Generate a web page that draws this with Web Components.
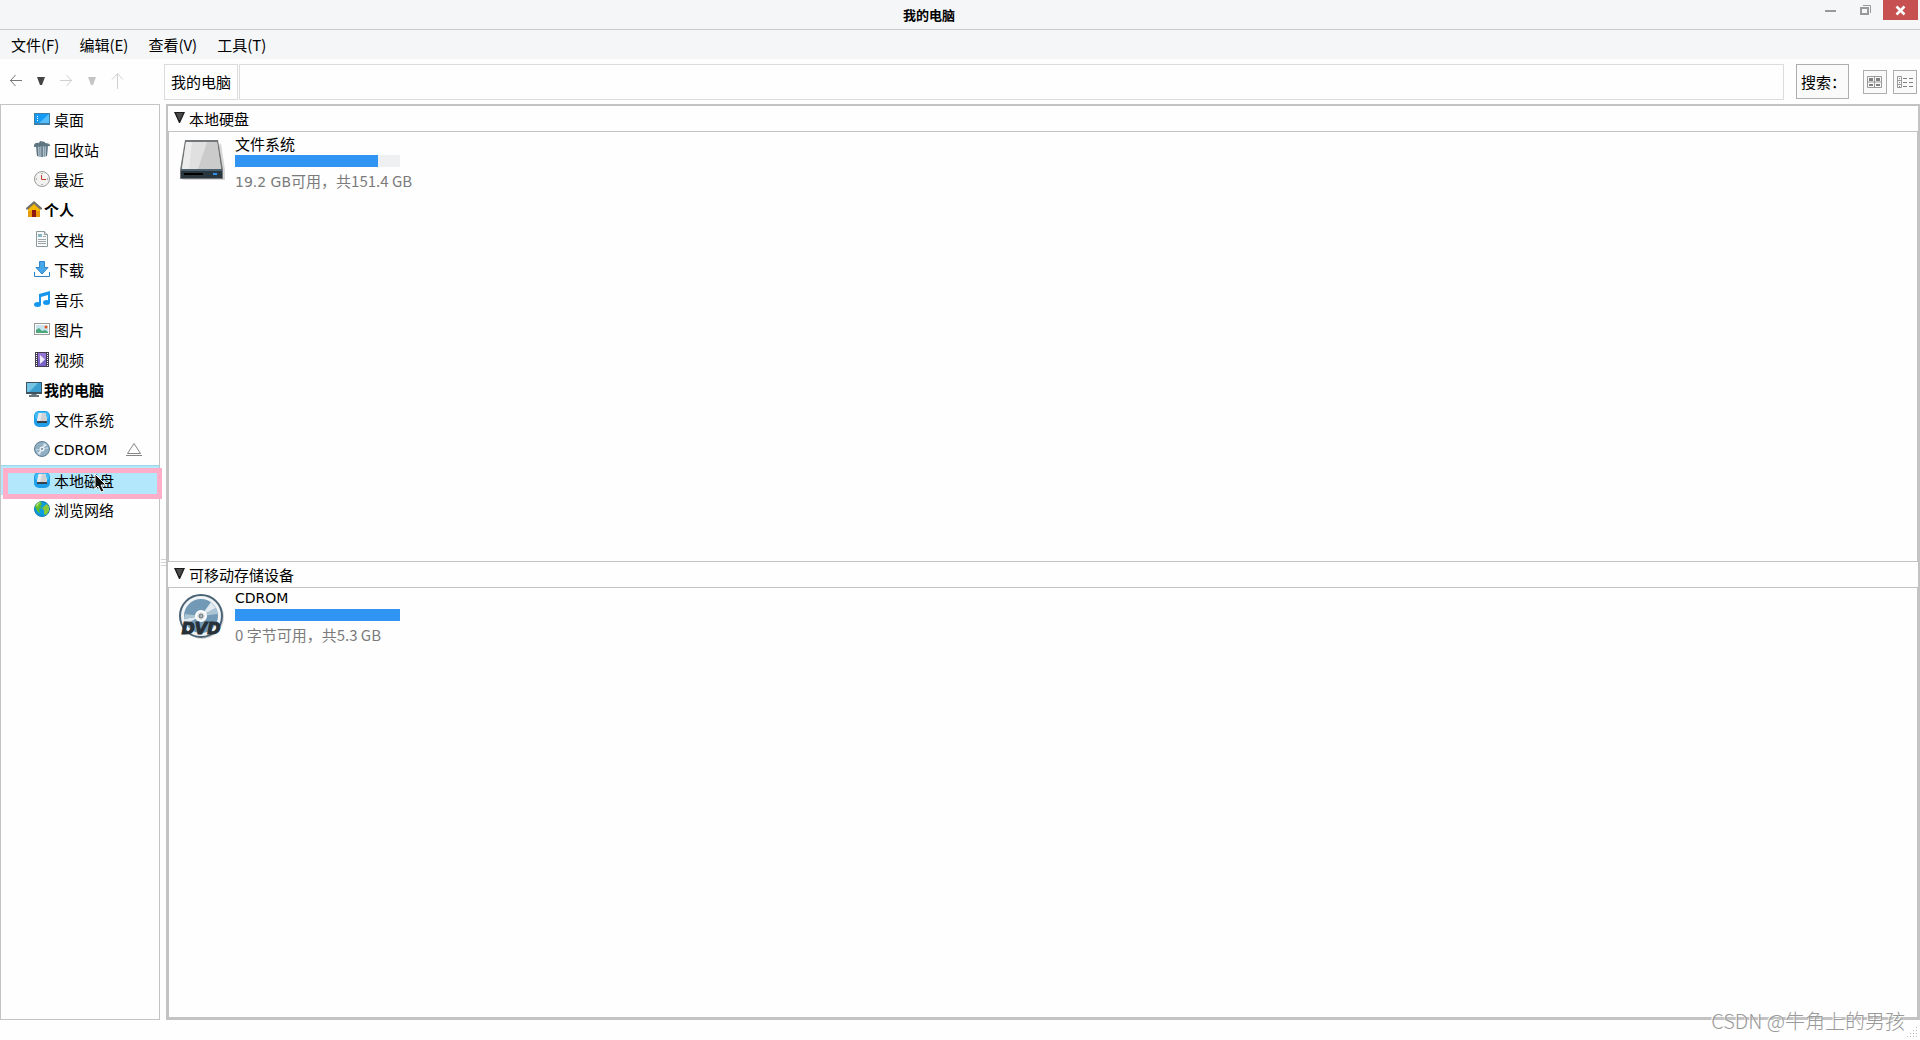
<!DOCTYPE html>
<html lang="zh-CN">
<head>
<meta charset="utf-8">
<title>我的电脑</title>
<style>
    html, body {
        height: 100%;
        margin: 0;
    }
    body {
        background: #fefefe;
        font-family: "Noto Sans CJK SC", sans-serif;
        font-size: 15px;
        color: #000;
        overflow: hidden;
    }
</style>
</head>
<body>
<file-manager></file-manager>

<script>
const line = (d, color, width = 1) => `<path d="${d}" fill="none" stroke="${color}" stroke-width="${width}"/>`;

const icons = {
    desktop: `
        <rect y="2" width="16" height="12" fill="#3f7ea6"/>
        <rect x="1" y="3" width="14" height="9" fill="#139af5"/>
        <path d="M15 3v9H5z" fill="#55bdf9"/>
        <path d="M3 5h1v1H3zM3 7h1v1H3zM3 9h1v1H3z" fill="#fff"/>`,
    trash: `
        <path d="M2 5h12l-1 10q-5 2-10 0z" fill="#8099a6"/>
        ${line('M4.5 5l.5 10M7 5v11M9.5 5v11M12 5l-.5 10', '#b5c4cc')}
        ${line('M3 5l.5 10M8 6v10M13 5l-.5 10', '#566d79')}
        <path d="M0 4q1-3 5-2l1-2 5 1v1q4 0 5 2v1L0 6z" fill="#5f7581"/>`,
    clock: `
        <circle cx="8" cy="8" r="7.5" fill="#f2f2f0" stroke="#9b9b9b"/>
        ${line('M8 2v1M8 13v1M2 8h1M13 8h1', '#777')}
        ${line('M7.5 4v4.5H12', '#c63b34')}`,
    home: `
        <path d="M2 7l6-5 6 5v9H2z" fill="#f5b800"/>
        <path d="M2 10h12v6H2z" fill="#e99a0a"/>
        <path d="M6 9h4v7H6z" fill="#8f1710"/>
        <path d="M0 8.5V7l8-7 8 7v1.5h-2L8 3 2 8.5z" fill="#77716b"/>`,
    doc: `
        <path d="M2.5.5h8l3 3v12h-11z" fill="#f7f8f8" stroke="#8c9a9c"/>
        <path d="M10.5.5v3h3" fill="#dde2e3" stroke="#8c9a9c"/>
        <path d="M4 3h4v3H4z" fill="#8ab3c5"/>
        ${line('M4 8.5h8M4 10.5h8M4 12.5h8M9 5.5h3', '#9da5a8')}`,
    download: `
        <path d="M5.5.5h5v6H14L8 13 2 6.5h3.5z" fill="#48a7e9" stroke="#2d86cf"/>
        ${line('M.5 11v4.5h15V11', '#3180c0')}`,
    music: `
        <path d="M5 3l11-3v12h-2V4L7 6v8H5z" fill="#1597ee"/>
        <ellipse cx="3.5" cy="13.5" rx="3.5" ry="2.5" fill="#1597ee"/>
        <ellipse cx="12.5" cy="11.5" rx="3.5" ry="2.5" fill="#1597ee"/>`,
    picture: `
        <rect x=".5" y="2.5" width="15" height="11" fill="#fff" stroke="#999"/>
        <rect x="2" y="4" width="12" height="8" fill="#c8e4ef"/>
        <path d="M2 12V9l3-2 3 3 3-1 3 2v1z" fill="#4ca87b"/>
        <circle cx="12" cy="6" r="1.5" fill="#e8551c"/>`,
    video: `
        <path d="M1 1h14v15H1z" fill="#443d50"/>
        <path d="M4 2h8v13H4z" fill="#7a63c8"/>
        <path d="M4 2h8v6H4z" fill="#9674d4"/>
        <path d="M2.5 2v14M13.5 2v14" stroke="#fff" stroke-dasharray="1 1"/>
        <path d="M6 4l5 4.5L6 13z" fill="#eeeafa"/>`,
    computer: `
        <rect y="1" width="16" height="12" fill="#3e5361"/>
        <rect x="1" y="2" width="14" height="9" fill="#3a9fce"/>
        <path d="M1 2h11L3 11H1z" fill="#74c5e5"/>
        <path d="M6 13h4l1 1h2v2H3v-2h2z" fill="#68777f"/>`,
    disk: `
        <rect width="16" height="16" rx="5" fill="#1f9fea"/>
        <rect x="1" y="1" width="14" height="8" rx="4" fill="#43bcf5"/>
        <path d="M4.5 2h7L13 9v2H3V9z" fill="#e9eaec"/>
        <path d="M8 2h3.5L13 9v2H6z" fill="#cfd1d4"/>
        <path d="M3 10h10v2H3z" fill="#34434d"/>`,
    cd: `
        <circle cx="8" cy="8" r="7.5" fill="#91afc3" stroke="#607f95"/>
        <path d="M8 8l2-6 3 2zM8 8l-2 6-3-2z" fill="#d9e6ee"/>
        <path d="M8 8l6-2v2zM8 8l-6 2V8z" fill="#b9cfdc"/>
        <circle cx="8" cy="8" r="2.5" fill="#eaf0f4"/>
        <circle cx="8" cy="8" r="1" fill="#6c8799"/>`,
    globe: `
        <circle cx="8" cy="8" r="7.5" fill="#0b9bdf" stroke="#1378ac"/>
        <path d="M1 5q2-4 6-4.5L8 4 6 5l2 2-3 1 1 3-1 1Q2 9 1 5z" fill="#59bd2d"/>
        <path d="M10 5l3-2 2 3v4l-3 4-2-1V9L8 8z" fill="#88c83b"/>
        <path d="M2 4q2-3 5-3L5 3 3 6z" fill="#b4dd64"/>`
};

const driveIcon = `
    <svg width="48" height="48" viewBox="0 0 48 48" aria-hidden="true">
        <path d="M4 44h43V34l-4-27z" fill="#000" opacity=".15"/>
        <path d="M7 4h33l5 30v9H2v-9z" fill="#73777a"/>
        <path d="M8 6h31l4 27H4z" fill="#e0e0e0"/>
        <path d="M29 6h10l4 27H20z" fill="#cbcbcb"/>
        <path d="M8 6h6l-3 27H4z" fill="#ececec"/>
        <path d="M3 33h41v9H3z" fill="#29363e"/>
        <path d="M3 33h41v2H3z" fill="#4b606d"/>
        <path d="M6 37h19v2H6z" fill="#000"/>
        <path d="M35 37h4v2h-4z" fill="#2a91f5"/>
    </svg>`;

const dvdIcon = `
    <svg width="48" height="48" viewBox="0 0 48 48" aria-hidden="true">
        <circle cx="24" cy="25" r="22" fill="#000" opacity=".15"/>
        <circle cx="23" cy="24" r="21" fill="#f0f4f6" stroke="#4a6375" stroke-width="2"/>
        <circle cx="23" cy="24" r="17" fill="#7299b5"/>
        <path d="M23 24L33 10l5 6zM23 24L8 32l-2-5z" fill="#dfe9ef"/>
        <path d="M23 24l15-8 2 6zM23 24L7 22l-1 5z" fill="#aac4d4"/>
        <circle cx="23" cy="24" r="5" fill="#e4e8ea" stroke="#fff" stroke-width="2"/>
        <circle cx="23" cy="24" r="2" fill="#aab2b5" stroke="#6a7479"/>
        <text x="23" y="42" text-anchor="middle" font-family="DejaVu Sans, sans-serif" font-size="16" font-weight="bold" font-style="italic" fill="#273137" stroke="#273137">DVD</text>
    </svg>`;

class TitleBar extends HTMLElement {
    constructor() {
        super();
        this.attachShadow({mode: 'open'}).innerHTML = `
<style>
    :host {
        display: grid;
        height: 29px;
        background: #f4f6f8;
        border-bottom: 1px solid #c8cbcc;
    }
    h1, .buttons {
        grid-area: 1 / 1;
    }
    h1 {
        margin: 0;
        padding-right: 62px;
        text-align: center;
        font-size: 13px;
        line-height: 30px;
        font-weight: bold;
    }
    .buttons {
        justify-self: end;
        display: flex;
        align-items: flex-start;
        padding-right: 2px;
    }
    button {
        display: block;
        border: 0;
        padding: 0;
        background: none;
        width: 35px;
        height: 20px;
    }
    button.close {
        background: #c75050;
    }
    svg {
        display: block;
    }
</style>
<h1><slot></slot></h1>
<div class="buttons">
    <button aria-label="最小化"><svg width="35" height="20"><path d="M12 10h11v2H12z" fill="#999"/></svg></button>
    <button aria-label="还原"><svg width="35" height="20"><path d="M13 8h7v6h-7z" fill="none" stroke="#999" stroke-width="2"/><path d="M15 5.5h7.5V13" fill="none" stroke="#999"/></svg></button>
    <button class="close" aria-label="关闭"><svg width="35" height="20"><path d="M13.5 6.5l8 8M21.5 6.5l-8 8" stroke="#fff" stroke-width="2.5"/></svg></button>
</div>`;
    }
}

class MenuBar extends HTMLElement {
    constructor() {
        super();
        this.attachShadow({mode: 'open'}).innerHTML = `
<style>
    :host {
        display: flex;
        gap: 20px;
        height: 29px;
        padding: 0 11px;
        background: #f4f6f8;
    }
    button {
        border: 0;
        padding: 0;
        background: none;
        font: inherit;
        line-height: 30px;
        color: inherit;
    }
</style>
<button>文件(F)</button>
<button>编辑(E)</button>
<button>查看(V)</button>
<button>工具(T)</button>`;
    }
}

class ToolBar extends HTMLElement {
    constructor() {
        super();
        this.attachShadow({mode: 'open'}).innerHTML = `
<style>
    :host {
        display: flex;
        align-items: center;
        height: 45px;
        padding-right: 3px;
    }
    button, input {
        box-sizing: border-box;
        border: 0;
        padding: 0;
        background: none;
        font: inherit;
        color: inherit;
    }
    svg {
        display: block;
    }
    .nav {
        display: flex;
        flex: 0 0 164px;
        padding-bottom: 3px;
        box-sizing: border-box;
    }
    .nav button {
        padding-left: 10px;
    }
    .nav button:first-child {
        padding-left: 9px;
    }
    .crumb, .path {
        height: 36px;
        border: 1px solid #dcdcdc;
        background: #fefefe;
    }
    .crumb {
        padding: 0 6px;
        margin-right: 1px;
    }
    .path {
        flex: 1;
        min-width: 0;
    }
    .search, .view {
        border: 1px solid #aeaeae;
        background: #fafafa;
    }
    .search {
        height: 35px;
        width: 53px;
        margin: 0 14px 0 12px;
        padding: 0 4px;
        text-align: left;
        white-space: nowrap;
        overflow: hidden;
    }
    .view {
        width: 24px;
        height: 24px;
        padding: 3px;
    }
    .view + .view {
        margin-left: 6px;
    }
</style>
<div class="nav">
    <button aria-label="后退"><svg width="13" height="18">${line('M13 9.5H1M6.5 4l-5 5.5 5 5.5', '#777')}</svg></button>
    <button aria-label="后退历史"><svg width="18" height="18"><path d="M5 6h8l-3 8H8z" fill="#444"/></svg></button>
    <button aria-label="前进" disabled><svg width="13" height="18">${line('M0 9.5h12M6.5 4l5 5.5-5 5.5', '#d0d0d0')}</svg></button>
    <button aria-label="前进历史" disabled><svg width="18" height="18"><path d="M5 6h8l-3 8H8z" fill="#c4c4c4"/></svg></button>
    <button aria-label="向上" disabled><svg width="13" height="18">${line('M6.5 18V3M1 8.5l5.5-6 5.5 6', '#d0d0d0')}</svg></button>
</div>
<button class="crumb">我的电脑</button>
<input class="path" aria-label="路径">
<button class="search">搜索：</button>
<button class="view" aria-label="图标视图"><svg width="16" height="16">
    ${line('M.5 2.5h14v11H.5zM7.5 2v12M0 8h15', '#999')}
    <path d="M2 4h4v3H2zM9 4h4v3H9zM2 10h4v2H2zM9 10h4v2H9z" fill="#808080"/>
</svg></button>
<button class="view" aria-label="列表视图"><svg width="16" height="16">
    ${line('M.5 2.5h4v11h-4zM0 6.5h5M0 10.5h5', '#999')}
    <path d="M2 4h1v1H2zM2 8h1v1H2zM2 12h1v1H2zM6 4h4v1H6zM12 4h4v1h-4zM6 8h4v1H6zM12 8h4v1h-4zM6 12h4v1H6zM12 12h4v1h-4z" fill="#808080"/>
</svg></button>`;
    }
}

class PlaceItem extends HTMLElement {
    connectedCallback() {
        const shadow = this.shadowRoot || this.attachShadow({mode: 'open'});
        shadow.innerHTML = `
<style>
    :host {
        display: flex;
        align-items: center;
        box-sizing: border-box;
        height: 30px;
        padding-left: 33px;
        position: relative;
    }
    :host([heading]) {
        padding-left: 25px;
        font-weight: bold;
    }
    :host([latin]) {
        font-family: "DejaVu Sans", sans-serif;
        font-size: 14px;
    }
    :host([selected]) {
        background: #b3e7fb;
        border-top: 1px solid #9bd6ec;
    }
    a {
        display: flex;
        align-items: center;
        gap: 4px;
        color: inherit;
        text-decoration: none;
        line-height: 30px;
    }
    :host([heading]) a {
        gap: 2px;
    }
    svg {
        display: block;
        margin-bottom: 2px;
    }
    .eject {
        border: 0;
        padding: 0;
        margin-left: 19px;
        background: none;
    }
    .eject svg {
        margin: 0;
    }
    /* frame drawn round the marked place */
    .mark {
        position: absolute;
        inset: 2px -3px -4px 2px;
        border: 5px solid #ffaec9;
        z-index: 1;
    }
    .pointer {
        position: absolute;
        left: 93px;
        top: 7px;
        z-index: 2;
    }
</style>
<a href="#"><svg width="16" height="16" viewBox="0 0 16 16" aria-hidden="true">${icons[this.getAttribute('icon')]}</svg><slot></slot></a>`;
        if (this.hasAttribute('eject')) {
            shadow.innerHTML += `<button class="eject" aria-label="弹出"><svg width="16" height="14">${line('M8 .5l-6.5 10h13zM0 12.5h16', '#858585')}</svg></button>`;
        }
        if (this.hasAttribute('selected')) {
            shadow.innerHTML += `<div class="mark"></div>
<svg class="pointer" width="14" height="20"><path d="M1 1v15l3-3 3 6 3-1-3-6h5z" fill="#111" stroke="#fff"/></svg>`;
        }
    }
}

class PlacesPanel extends HTMLElement {
    constructor() {
        super();
        this.attachShadow({mode: 'open'}).innerHTML = `
<style>
    :host {
        display: block;
        box-sizing: border-box;
        border: 1px solid #c3c3c3;
    }
</style>
<nav aria-label="位置">
    <place-item icon="desktop">桌面</place-item>
    <place-item icon="trash">回收站</place-item>
    <place-item icon="clock">最近</place-item>
    <place-item icon="home" heading>个人</place-item>
    <place-item icon="doc">文档</place-item>
    <place-item icon="download">下载</place-item>
    <place-item icon="music">音乐</place-item>
    <place-item icon="picture">图片</place-item>
    <place-item icon="video">视频</place-item>
    <place-item icon="computer" heading>我的电脑</place-item>
    <place-item icon="disk">文件系统</place-item>
    <place-item icon="cd" latin eject>CDROM</place-item>
    <place-item icon="disk" selected>本地磁盘</place-item>
    <place-item icon="globe">浏览网络</place-item>
</nav>`;
    }
}

class DriveGroup extends HTMLElement {
    connectedCallback() {
        const shadow = this.shadowRoot || this.attachShadow({mode: 'open'});
        shadow.innerHTML = `
<style>
    :host {
        display: flex;
        flex-direction: column;
        flex: 1 1 0;
        min-height: 0;
    }
    .header {
        display: flex;
        align-items: center;
        gap: 4px;
        height: 25px;
        border: 0;
        padding: 0 6px;
        background: none;
        font: inherit;
        color: inherit;
    }
    .header svg {
        margin-bottom: 3px;
    }
    .list {
        flex: 1;
        border: 1px solid #c3c3c3;
    }
</style>
<button class="header" aria-expanded="true">
    <svg width="11" height="11" aria-hidden="true">
        <path d="M0 0h11L6 11H5z" fill="#1c1c1c"/>
        <path d="M2 1h7L6 8H5z" fill="#4a4a4a"/>
    </svg>
    <span></span>
</button>
<div class="list"><slot></slot></div>`;
        shadow.querySelector('span').textContent = this.getAttribute('label');
    }
}

class DriveItem extends HTMLElement {
    connectedCallback() {
        const shadow = this.shadowRoot || this.attachShadow({mode: 'open'});
        shadow.innerHTML = `
<style>
    :host {
        display: flex;
        align-items: flex-start;
        gap: 9px;
        padding-left: 9px;
    }
    svg {
        display: block;
        margin-top: 4px;
    }
    .name {
        line-height: 23px;
    }
    :host([latin]) .name {
        font-family: "DejaVu Sans", sans-serif;
        font-size: 14px;
        line-height: 21px;
    }
    progress {
        display: block;
        appearance: none;
        width: 165px;
        height: 12px;
        border: 0;
    }
    progress::-webkit-progress-bar {
        background: #eef0f2;
    }
    progress::-webkit-progress-value {
        background: #3094f2;
    }
    .size {
        line-height: 27px;
        color: #7b7b7b;
    }
</style>
${this.getAttribute('icon') === 'dvd' ? dvdIcon : driveIcon}
<div>
    <div class="name" id="name"><slot name="name"></slot></div>
    <progress aria-labelledby="name" max="165" value="${this.getAttribute('used')}"></progress>
    <div class="size"><slot></slot></div>
</div>`;
    }
}

class FileManager extends HTMLElement {
    constructor() {
        super();
        this.attachShadow({mode: 'open'}).innerHTML = `
<style>
    :host {
        display: flex;
        flex-direction: column;
        height: 100%;
        position: relative;
    }
    main {
        flex: 1;
        min-height: 0;
        display: grid;
        grid-template-columns: 160px 6px 1fr;
    }
    .handle {
        align-self: center;
        display: grid;
        gap: 2px;
        padding-left: 1px;
    }
    .handle i {
        height: 1px;
        background: #d2d2d2;
    }
    .drives {
        display: flex;
        flex-direction: column;
        border: 2px solid #c3c3c3;
    }
    .wide {
        font-family: "DejaVu Sans", sans-serif;
        font-size: 14px;
    }
    footer {
        display: flex;
        justify-content: flex-end;
        align-items: flex-end;
        height: 20px;
        padding-right: 2px;
    }
    footer svg {
        margin-bottom: 2px;
    }
    .watermark {
        position: absolute;
        right: 15px;
        bottom: 4px;
        font-size: 20px;
        font-weight: 300;
        line-height: 30px;
        color: #999;
        text-shadow: -1px -1px #fff;
    }
</style>
<title-bar>我的电脑</title-bar>
<menu-bar></menu-bar>
<tool-bar></tool-bar>
<main>
    <places-panel></places-panel>
    <div class="handle"><i></i><i></i><i></i></div>
    <div class="drives">
        <drive-group label="本地硬盘">
            <drive-item icon="drive" used="143"><span slot="name">文件系统</span><span class="wide">19.2 GB</span>可用，共151.4 GB</drive-item>
        </drive-group>
        <drive-group label="可移动存储设备">
            <drive-item icon="dvd" used="165" latin><span slot="name">CDROM</span>0 字节可用，共5.3 GB</drive-item>
        </drive-group>
    </div>
</main>
<footer>
    <svg width="11" height="11" aria-hidden="true"><path d="M9 0h1v1H9zM6 3h1v1H6zM9 3h1v1H9zM3 6h1v1H3zM6 6h1v1H6zM9 6h1v1H9zM0 9h1v1H0zM3 9h1v1H3zM6 9h1v1H6zM9 9h1v1H9z" fill="#bbb"/></svg>
</footer>
<div class="watermark">CSDN @牛角上的男孩</div>`;
    }
}

customElements.define('title-bar', TitleBar);
customElements.define('menu-bar', MenuBar);
customElements.define('tool-bar', ToolBar);
customElements.define('place-item', PlaceItem);
customElements.define('places-panel', PlacesPanel);
customElements.define('drive-group', DriveGroup);
customElements.define('drive-item', DriveItem);
customElements.define('file-manager', FileManager);
</script>
</body>
</html>
